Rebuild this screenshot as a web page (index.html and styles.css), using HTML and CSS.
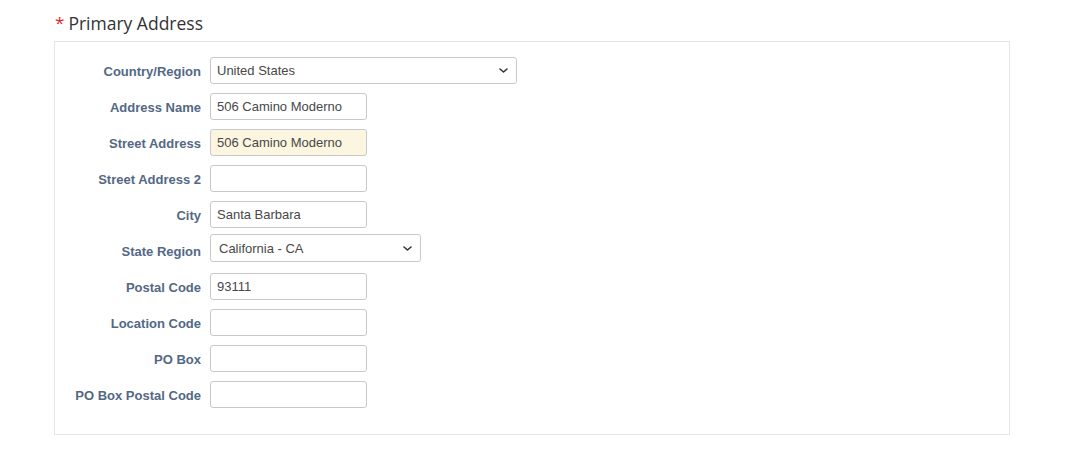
FILE: index.html
```html
<!DOCTYPE html>
<html>
<head>
<meta charset="utf-8">
<link rel="stylesheet" href="styles.css">
</head>
<body>
<div class="page">
  <h2 class="section-title"><span class="req">*</span>Primary Address</h2>
  <div class="panel">
    <div class="row">
      <label class="lbl">Country/Region</label>
      <div class="select select-wide"><span>United States</span><svg class="chev" viewBox="0 0 9 5" width="9" height="5"><path d="M1 1l3.5 3L8 1" fill="none" stroke="#333" stroke-width="1.6" stroke-linecap="round" stroke-linejoin="round"/></svg></div>
    </div>
    <div class="row">
      <label class="lbl">Address Name</label>
      <div class="input">506 Camino Moderno</div>
    </div>
    <div class="row">
      <label class="lbl">Street Address</label>
      <div class="input input-auto">506 Camino Moderno</div>
    </div>
    <div class="row">
      <label class="lbl">Street Address 2</label>
      <div class="input"></div>
    </div>
    <div class="row">
      <label class="lbl">City</label>
      <div class="input">Santa Barbara</div>
    </div>
    <div class="row">
      <label class="lbl">State Region</label>
      <div class="select select-mid"><span>California - CA</span><svg class="chev" viewBox="0 0 9 5" width="9" height="5"><path d="M1 1l3.5 3L8 1" fill="none" stroke="#333" stroke-width="1.6" stroke-linecap="round" stroke-linejoin="round"/></svg></div>
    </div>
    <div class="row">
      <label class="lbl">Postal Code</label>
      <div class="input">93111</div>
    </div>
    <div class="row">
      <label class="lbl">Location Code</label>
      <div class="input"></div>
    </div>
    <div class="row">
      <label class="lbl">PO Box</label>
      <div class="input"></div>
    </div>
    <div class="row">
      <label class="lbl">PO Box Postal Code</label>
      <div class="input"></div>
    </div>
  </div>
</div>
</body>
</html>
```

FILE: styles.css
```css
html, body {
  margin: 0;
  padding: 0;
  background: #fff;
}
.page {
  padding: 10px 0 0 54px;
  width: 956px;
}
.section-title {
  margin: 0 0 5px 1px;
  font-family: "Open Sans", sans-serif;
  font-weight: 400;
  font-size: 17.5px;
  line-height: 26px;
  color: #333;
  display: flex;
  align-items: flex-start;
}
.req {
  color: #e0262b;
  font-size: 17px;
  line-height: 20px;
  margin-right: 4px;
  margin-top: 3px;
}
.panel {
  border: 1px solid #e6e6e6;
  padding: 15px 0 26px 0;
  display: flex;
  flex-direction: column;
  gap: 9px;
}
.row {
  display: flex;
  align-items: center;
  gap: 9px;
  height: 27px;
}
.lbl {
  width: 146px;
  text-align: right;
  font-family: "Liberation Sans", Arial, sans-serif;
  font-weight: 700;
  font-size: 13px;
  color: #536884;
  padding-top: 2px;
}
.input, .select {
  box-sizing: border-box;
  height: 27px;
  border: 1px solid #c9c9c9;
  border-radius: 3px;
  background: #fff;
  font-family: "Liberation Sans", Arial, sans-serif;
  font-size: 13px;
  color: #484848;
  display: flex;
  align-items: center;
  padding: 0 6px;
}
.input {
  width: 157px;
}
.input-auto {
  background: #fcf6e0;
}
.select {
  justify-content: space-between;
  padding-right: 8px;
}
.select-wide {
  width: 307px;
}
.select-mid {
  width: 211px;
  padding-left: 8px;
  margin-top: -5px;
  height: 28px;
}
.chev {
  display: block;
}
```
